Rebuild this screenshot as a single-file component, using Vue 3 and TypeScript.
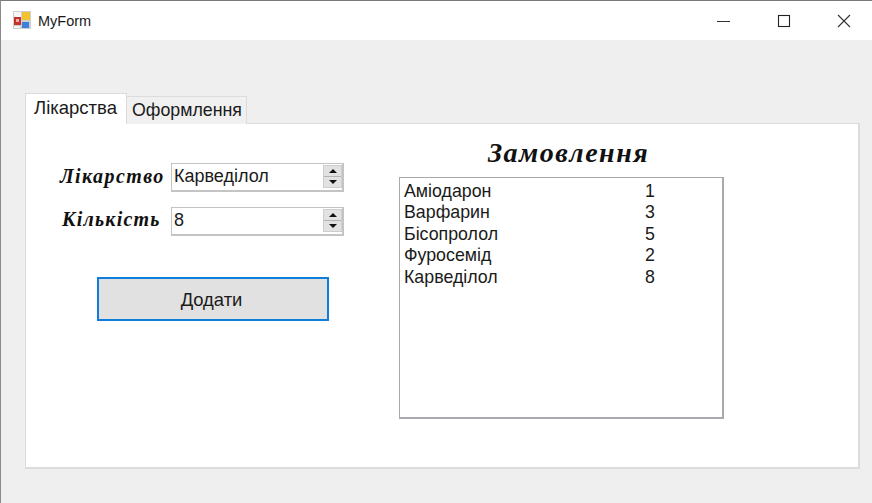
<script setup lang="ts">
const orders: { name: string; qty: number }[] = [
  { name: 'Аміодарон', qty: 1 },
  { name: 'Варфарин', qty: 3 },
  { name: 'Бісопролол', qty: 5 },
  { name: 'Фуросемід', qty: 2 },
  { name: 'Карведілол', qty: 8 },
]
const fields = [
  { label: 'Лікарство', value: 'Карведілол' },
  { label: 'Кількість', value: '8' },
]
</script>

<template>
  <div class="window">
    <header class="titlebar">
      <div class="title-left">
        <svg class="app-icon" width="18" height="18" viewBox="0 0 18 18">
          <rect width="18" height="18" fill="#cfcfcf" />
          <rect x="1" y="1" width="7" height="5" fill="#f6f6f6" />
          <rect x="9" y="1" width="8" height="8" fill="#f2c230" />
          <rect x="1" y="6" width="7" height="8" fill="#c8302a" />
          <rect x="3" y="8" width="3" height="3" fill="#eeb0a8" />
          <rect x="9" y="11" width="7" height="6" fill="#3f7fdc" />
          <rect x="1" y="15" width="6" height="2" fill="#f0f0f0" />
        </svg>
        <span class="title-text">MyForm</span>
      </div>
      <div class="controls">
        <svg width="14" height="14" viewBox="0 0 14 14"><path d="M0 7.5H13" stroke="#333" stroke-width="1" /></svg>
        <svg width="14" height="14" viewBox="0 0 14 14"><rect x="1.5" y="1.5" width="11" height="11" fill="none" stroke="#222" stroke-width="1.1" /></svg>
        <svg width="14" height="14" viewBox="0 0 14 14"><path d="M1 1L13 13M13 1L1 13" stroke="#333" stroke-width="1.1" /></svg>
      </div>
    </header>

    <main class="client">
      <div class="tabs">
        <div class="tab active">Лікарства</div>
        <div class="tab">Оформлення</div>
      </div>
      <section class="panel">
        <div class="left">
          <div v-for="f in fields" :key="f.label" class="field">
            <span class="script-label">{{ f.label }}</span>
            <div class="spin">
              <span class="spin-value">{{ f.value }}</span>
              <div class="spin-buttons">
                <div class="spin-btn"><i class="arrow up"></i></div>
                <div class="spin-btn"><i class="arrow down"></i></div>
              </div>
            </div>
          </div>
          <button class="add" type="button">Додати</button>
        </div>
        <div class="right">
          <h2 class="heading">Замовлення</h2>
          <div class="list">
            <div v-for="o in orders" :key="o.name" class="row">
              <span class="row-name">{{ o.name }}</span>
              <span>{{ o.qty }}</span>
            </div>
          </div>
        </div>
      </section>
    </main>
  </div>
</template>

<style>
html, body { margin: 0; padding: 0; }
</style>

<style scoped>
.window {
  width: 872px;
  height: 503px;
  box-sizing: border-box;
  border-top: 1px solid #7a7a7a;
  border-left: 1px solid #8a8a8a;
  background: #f0f0f0;
  font-family: "Liberation Sans", Arial, sans-serif;
  color: #1a1a1a;
  overflow: hidden;
  display: flex;
  flex-direction: column;
}
.titlebar {
  height: 39px;
  flex: none;
  background: #fff;
  display: flex;
  align-items: center;
  justify-content: space-between;
}
.title-left {
  display: flex;
  align-items: center;
  margin-left: 12px;
  gap: 7px;
}
.app-icon { display: block; margin-top: -2px; }
.title-text { font-size: 14.5px; margin-top: 1px; }
.controls {
  display: flex;
  gap: 46px;
  margin-right: 21px;
  margin-top: 1px;
}
.controls svg { display: block; }
.client {
  flex: 1;
  padding: 53px 11px 0 24px;
  background: #efefef;
}
.tabs {
  display: flex;
  align-items: flex-end;
  height: 31px;
  position: relative;
  z-index: 1;
  margin-bottom: -1px;
}
.tab {
  box-sizing: border-box;
  height: 28px;
  width: 120px;
  padding-left: 5px;
  line-height: 27px;
  font-size: 17.8px;
  background: #f0f0f0;
  border: 1px solid #dcdcdc;
  border-bottom: none;
  border-left: none;
}
.tab.active {
  width: 102px;
  height: 31px;
  background: #fff;
  border-left: 1px solid #dcdcdc;
  padding-left: 8px;
  line-height: 28px;
  font-size: 18.5px;
}
.panel {
  box-sizing: border-box;
  width: 835px;
  height: 346px;
  background: #fff;
  border: 1px solid #dcdcdc;
  border-right-width: 2px;
  border-bottom-width: 2px;
  display: flex;
}
.left {
  width: 373px;
  flex: none;
  box-sizing: border-box;
  padding: 39px 0 0 34px;
}
.field {
  display: flex;
  align-items: center;
  height: 28px;
  margin-bottom: 16px;
}
.script-label {
  box-sizing: border-box;
  width: 111px;
  flex: none;
  font-family: "Liberation Serif", serif;
  font-style: italic;
  font-weight: bold;
  font-size: 20px;
  letter-spacing: 1.4px;
  color: #111;
  margin-top: -2px;
}
.field:nth-child(2) .script-label {
  padding-left: 2px;
  letter-spacing: 1.2px;
  margin-top: -4px;
}
.spin {
  box-sizing: border-box;
  width: 173px;
  height: 29px;
  border: 1px solid #c4c4c4;
  border-width: 1px 2px 2px 1px;
  display: flex;
  align-items: center;
  justify-content: space-between;
  font-size: 18px;
}
.spin-value { padding-left: 2px; }
.spin-buttons {
  width: 17px;
  display: flex;
  flex-direction: column;
  gap: 1px;
  background: #b4b4b4;
  border: 1px solid #cdcdcd;
}
.spin-btn {
  height: 10px;
  background: #e2e2e2;
  display: flex;
  align-items: center;
  justify-content: center;
}
.arrow {
  display: block;
  width: 0;
  height: 0;
  border-left: 4px solid transparent;
  border-right: 4px solid transparent;
}
.arrow.up { border-bottom: 4px solid #111; }
.arrow.down { border-top: 4px solid #111; }
.add {
  display: block;
  box-sizing: border-box;
  width: 232px;
  height: 44px;
  margin: 42px 0 0 37px;
  background: #e1e1e1;
  border: 2px solid #0f7ddb;
  font-family: inherit;
  font-size: 18.4px;
  color: #1a1a1a;
  padding: 2px 3px 0 0;
}
.right {
  width: 325px;
  flex: none;
}
.heading {
  margin: 11px 0 0;
  height: 42px;
  padding-left: 14px;
  text-align: center;
  font-family: "Liberation Serif", serif;
  font-style: italic;
  font-weight: bold;
  font-size: 28px;
  letter-spacing: 1.5px;
  line-height: 36px;
  color: #111;
}
.list {
  box-sizing: border-box;
  width: 325px;
  height: 242px;
  border: 1px solid #a8a8ae;
  border-width: 1px 2px 2px 1px;
  padding: 3px 0 0 4px;
  font-size: 17.8px;
  line-height: 21.4px;
}
.row { display: flex; }
.row-name { width: 241px; }
</style>
